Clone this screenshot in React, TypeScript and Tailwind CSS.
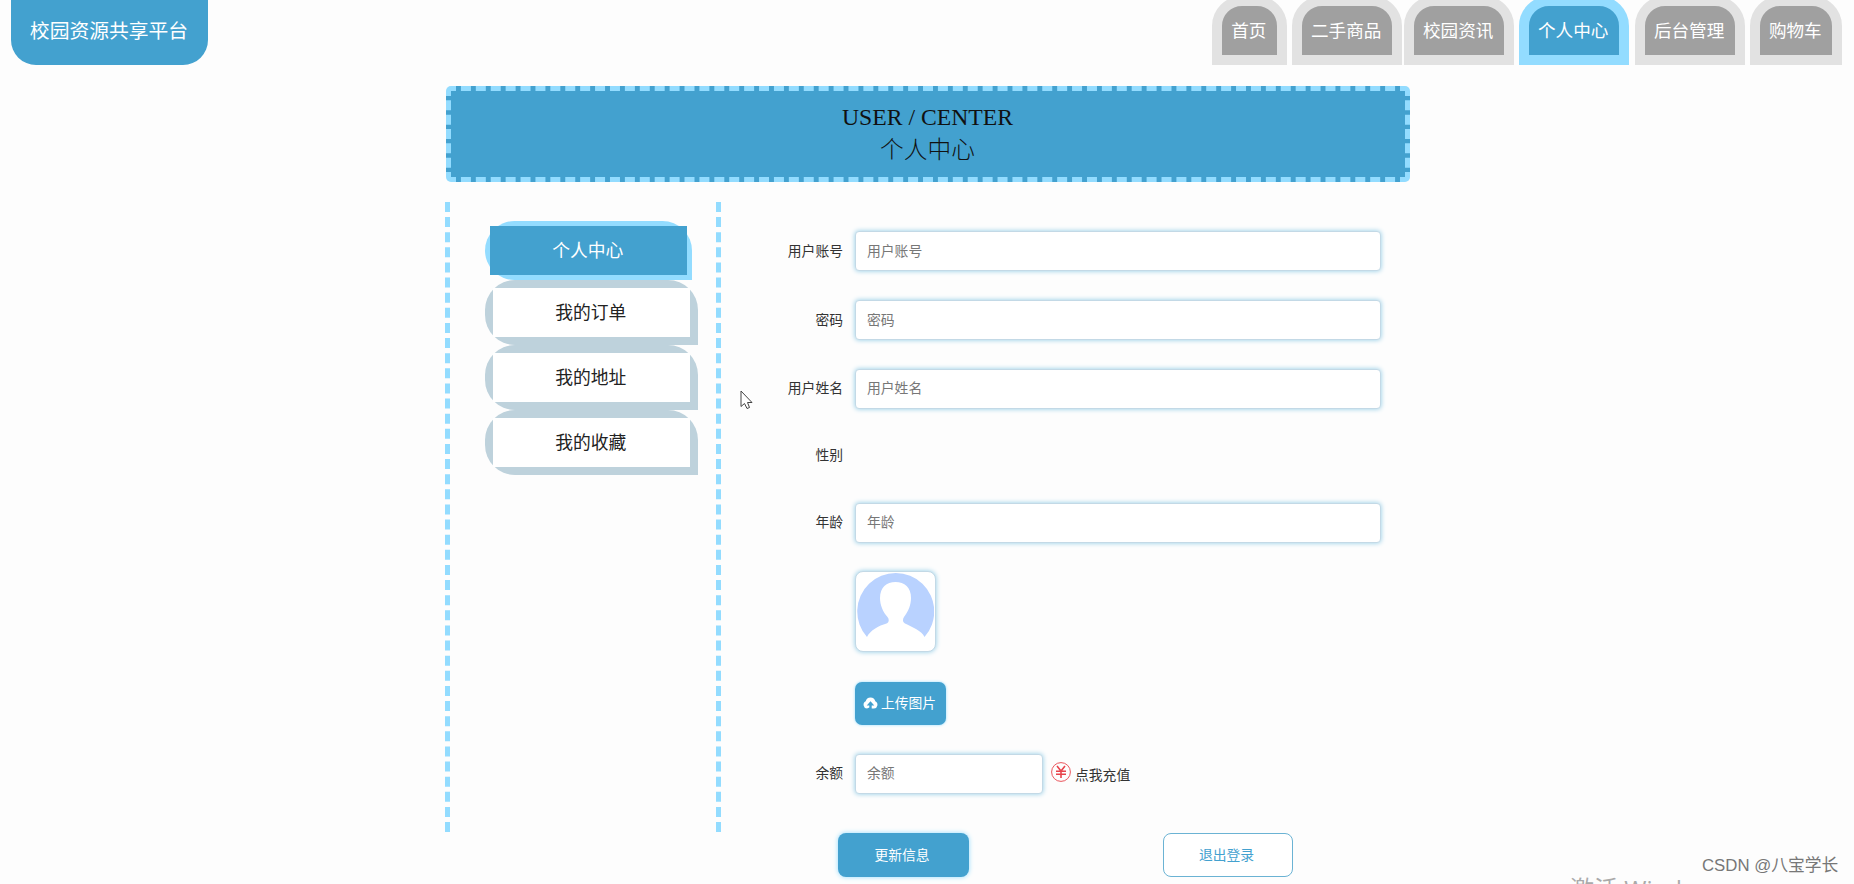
import React from 'react'
import clsx from 'clsx'

interface NavItem {
  title: string
  spacing: string
  active?: boolean
}

const navItems: NavItem[] = [
  { title: '首页', spacing: '' },
  { title: '二手商品', spacing: 'ml-[5px]' },
  { title: '校园资讯', spacing: 'ml-[2px]' },
  { title: '个人中心', spacing: 'ml-[5px]', active: true },
  { title: '后台管理', spacing: 'ml-[6px]' },
  { title: '购物车', spacing: 'ml-[5px]' },
]

const menuItems = ['个人中心', '我的订单', '我的地址', '我的收藏']

const Header: React.FC = () => (
  <header className="flex h-[65px] items-start justify-between pr-[12px] pl-[10.5px]">
    <div className="flex h-[65px] w-[197px] items-center justify-center rounded-b-[25px] bg-[#43a1cf] pb-1.5 text-[19.8px] text-white">
      校园资源共享平台
    </div>
    <nav className="-mt-1 flex">
      {navItems.map((item) => (
        <a
          key={item.title}
          className={clsx(
            'flex h-[69px] rounded-t-[30px] border-10 pr-[10.3px] pl-[9.3px] text-[17.6px] leading-[49px] text-white',
            item.spacing,
            item.active ? 'border-[#93dcff] bg-[#43a1cf]' : 'border-[#e2e2e2] bg-[#a0a0a0]',
          )}
        >
          <span className="-mt-px">{item.title}</span>
        </a>
      ))}
    </nav>
  </header>
)

const Banner: React.FC = () => (
  <div className="ml-[446px] mt-[21px] h-24 w-[964px] rounded-[5px] border-5 border-dashed border-[#93dcff] bg-[#43a1cf] pt-[10px] pr-px text-center font-['Liberation_Serif','Noto_Sans_CJK_SC',serif] text-[23.7px] text-[#111]">
    <div className="leading-[33px]">USER / CENTER</div>
    <div className="font-light leading-[33px]">个人中心</div>
  </div>
)

const Sidebar: React.FC = () => (
  <aside className="h-[630px] w-[276px] shrink-0 border-x-5 border-dashed border-[#93dcff] pl-[35px] pt-[19px]">
    {menuItems.map((title, index) => (
      <div
        key={title}
        className={clsx(
          'w-fit rounded-[30px] rounded-br-none',
          index === 0 ? 'bg-[#93dcff] p-[5px]' : 'bg-[#bed2dc] p-2',
        )}
      >
        <div
          className={clsx(
            'h-[49px] w-[196.6px] pr-px text-center text-[17.8px] leading-[47px]',
            index === 0 ? 'bg-[#43a1cf] text-white' : 'bg-white text-[#222]',
          )}
        >
          {title}
        </div>
      </div>
    ))}
  </aside>
)

interface FieldProps {
  label: string
  spacing: string
  width?: string
  children?: React.ReactNode
}

const Field: React.FC<FieldProps> = ({ label, spacing, width = 'w-[526px]', children }) => (
  <div className={clsx('flex h-10 items-center', spacing)}>
    <label className="w-[122px] pb-0.5 text-right">{label}</label>
    <input
      placeholder={label}
      className={clsx(
        'ml-3 h-10 rounded border border-[#c3d9e6] bg-white px-[11px] pb-[3px] shadow-[0_0_5px_#8fcbe6] placeholder:text-[#777]',
        width,
      )}
    />
    {children}
  </div>
)

const Avatar: React.FC = () => (
  <div className="ml-[134px] mt-[28px] h-[81px] w-[81px] rounded-lg border border-[#c3d9e6] bg-white px-px shadow-[0_0_5px_#8fcbe6]">
    <svg viewBox="0 0 77 77" className="h-[77px] w-[77px]">
      <path
        fill="#b9d2ff"
        d="M10 65A38.500 38.500 0 1 1 67.500 65C65 59 55 55 48 51.500C45.500 50 45.500 47.500 47 45C51.500 39 54 33 54 26C54 15.500 47.500 10 38.500 10S23 15.500 23 26C23 33 26 40 30.500 45C32.500 47.500 32 50.500 29.500 51.500C22 53.500 12.500 59 10 65Z"
      />
    </svg>
  </div>
)

const UploadIcon: React.FC = () => (
  <svg viewBox="0 0 15 12" className="h-3 w-[15px]">
    <path
      fill="#fff"
      d="M4 11.500A3.800 3.800 0 0 1 2.700 4.300A4.900 4.900 0 0 1 12.300 4.300A3.800 3.800 0 0 1 11 11.500H8.700V8.500H11.300L7.500 4.300L3.700 8.500H6.300V10.500Z"
    />
  </svg>
)

const YenIcon: React.FC = () => (
  <svg viewBox="0 0 20 20" className="mb-[3px] ml-2 h-5 w-5" fill="none" stroke="#e8434b">
    <circle cx="10" cy="10" r="9.400" strokeWidth="0.900" />
    <path strokeWidth="1.600" d="M6 4L10 9L14 4M10 9V16M5 9.300H15M5 12.200H15" />
  </svg>
)

const UserForm: React.FC = () => (
  <form className="text-[13.8px] text-[#333]">
    <Field label="用户账号" spacing="mt-[29px]" />
    <Field label="密码" spacing="mt-[29px]" />
    <Field label="用户姓名" spacing="mt-[28.500px]" />
    <div className="mt-[35px] w-[122px] text-right leading-5">性别</div>
    <Field label="年龄" spacing="mt-[39px]" />
    <Avatar />
    <button
      type="button"
      className="ml-[134px] mt-[30px] flex h-[43px] w-[91px] items-center justify-center gap-[3px] rounded-[7px] bg-[#43a1cf] pr-0.5 pb-px text-white shadow-[0_0_3px_#93dcff]"
    >
      <UploadIcon />
      上传图片
    </button>
    <Field label="余额" spacing="mt-[29px]" width="w-[188px]">
      <YenIcon />
      <span className="ml-1 mt-px">点我充值</span>
    </Field>
    <div className="mt-[39px] flex gap-[194px] pl-[117px]">
      <button
        type="button"
        className="h-11 w-[131px] rounded-lg bg-[#43a1cf] pr-[3px] pb-px text-white shadow-[0_0_5px_#93dcff]"
      >
        更新信息
      </button>
      <button
        type="button"
        className="h-11 w-[130px] rounded-lg border border-[#6bb3d4] bg-white pr-[3px] pb-px text-[#43a1cf]"
      >
        退出登录
      </button>
    </div>
  </form>
)

export default function App() {
  return (
    <div className="relative h-[884px] w-[1854px] overflow-hidden bg-[#fdfdfd] font-['Noto_Sans_CJK_SC',sans-serif]">
      <Header />
      <Banner />
      <main className="ml-[445px] mt-5 flex">
        <Sidebar />
        <UserForm />
      </main>

      {/* Mouse pointer */}
      <svg viewBox="0 0 13 20" className="absolute left-[740px] top-[390px] h-5 w-[13px]">
        <path
          fill="#fff"
          stroke="#444"
          d="M1 1V16.500L4.500 13.500L7 18.500L9.500 17.500L7.500 12.500H12Z"
        />
      </svg>

      <div className="absolute left-[1570px] top-[875px] whitespace-nowrap font-['Open_Sans','Noto_Sans_CJK_SC',sans-serif] text-2xl leading-7 text-[#aaa]">
        激活 Windows
      </div>
      <div className="absolute left-[1702px] top-[854px] whitespace-nowrap font-['Liberation_Sans','Noto_Sans_CJK_SC',sans-serif] text-[16.8px] leading-6 text-[#777]">
        CSDN @八宝学长
      </div>
    </div>
  )
}
